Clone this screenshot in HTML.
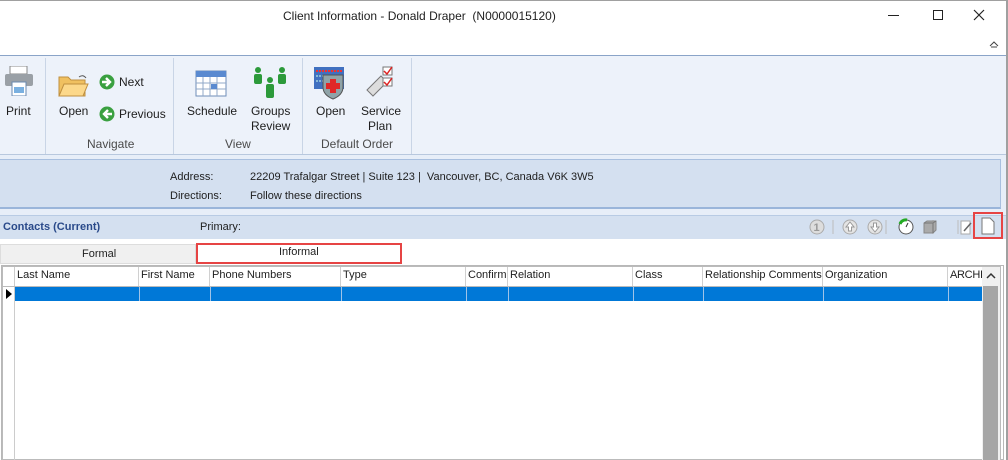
<!DOCTYPE html>
<html><head><meta charset="utf-8"><style>
*{margin:0;padding:0;box-sizing:border-box}
body{width:1008px;height:460px;overflow:hidden;background:#fff;font-family:"Liberation Sans","DejaVu Sans",sans-serif;font-size:12px;color:#1e1e1e;position:relative}
.a{position:absolute}
.t{position:absolute;white-space:nowrap}
.sep{position:absolute;top:58px;width:1px;height:96px;background:#c9d5e6}
.hd{position:absolute;top:267px;height:19px;border-right:1px solid #d0d0d0;font-size:11px;padding:2px 0 0 2px;white-space:nowrap;overflow:hidden}
.vl{position:absolute;top:287px;height:14px;width:1px;background:#9fc3e8}
</style></head><body>
<div class="a" style="left:1006px;top:0;width:2px;height:460px;background:#a0a0a0"></div>
<div class="a" style="left:0;top:0;width:1008px;height:1px;background:#a0a0a0"></div>
<div class="t" style="left:283px;top:9px;font-size:12px">Client Information - Donald Draper&nbsp; (N0000015120)</div>
<div class="a" style="left:888px;top:15px;width:11px;height:1px;background:#222"></div>
<div class="a" style="left:933px;top:10px;width:10px;height:10px;border:1px solid #222"></div>
<svg class="a" style="left:973px;top:9px" width="12" height="12"><path d="M1 1l10 10M11 1L1 11" stroke="#222" stroke-width="1.2"/></svg>
<svg class="a" style="left:989px;top:40px" width="10" height="8"><path d="M1 6l4-4 4 4M2 7h6" stroke="#444" fill="none"/></svg>
<div class="a" style="left:0;top:55px;width:1006px;height:100px;background:#edf2fa;border-top:1px solid #8aa4c8;border-bottom:1px solid #b8c8de"></div>
<div class="sep" style="left:45px"></div><div class="sep" style="left:173px"></div><div class="sep" style="left:302px"></div><div class="sep" style="left:411px"></div>
<svg class="a" style="left:4px;top:66px" width="30" height="30"><rect x="6" y="0" width="17" height="8" fill="#fff" stroke="#888"/><rect x="1" y="8" width="28" height="12" rx="2" fill="#9aa0a6"/><rect x="8" y="16" width="14" height="14" fill="#fff" stroke="#6a8ab0"/><rect x="10" y="21" width="10" height="6" fill="#7ab0e0"/></svg>
<svg class="a" style="left:57px;top:73px" width="32" height="26"><path d="M2 4h9l3 3h14v16H2z" fill="#f0c060" stroke="#c09040"/><path d="M2 23l5-12h24l-5 12z" fill="#fcd88a" stroke="#c09040"/><path d="M22 4q4-3 7 1" fill="none" stroke="#555"/></svg>
<svg class="a" style="left:99px;top:74px" width="16" height="16"><circle cx="8" cy="8" r="7.5" fill="#3aa040"/><path d="M3 8h6M7 4l4 4-4 4" stroke="#fff" stroke-width="2.4" fill="none"/></svg>
<svg class="a" style="left:99px;top:106px" width="16" height="16"><circle cx="8" cy="8" r="7.5" fill="#3aa040"/><path d="M13 8H7M9 4L5 8l4 4" stroke="#fff" stroke-width="2.4" fill="none"/></svg>
<svg class="a" style="left:195px;top:67px" width="32" height="30"><rect x="1" y="4" width="30" height="25" fill="#fff" stroke="#6f8db8"/><rect x="1" y="4" width="30" height="6" fill="#5a8ad0"/><path d="M1 16h30M1 22h30M8 10v19M15 10v19M22 10v19" stroke="#90a8c8"/><rect x="16" y="17" width="6" height="5" fill="#5a8ad0"/></svg>
<svg class="a" style="left:252px;top:66px" width="36" height="34"><g fill="#2c9a3a"><circle cx="6" cy="4" r="3"/><rect x="2" y="8" width="8" height="10" rx="2"/><circle cx="30" cy="4" r="3"/><rect x="26" y="8" width="8" height="10" rx="2"/><circle cx="18" cy="14" r="3"/><rect x="14" y="18" width="8" height="14" rx="2"/></g></svg>
<svg class="a" style="left:313px;top:66px" width="34" height="34"><rect x="1" y="1" width="30" height="22" fill="#4070c0"/><path d="M3 5h26" stroke="#e33" stroke-dasharray="2 1" stroke-width="2"/><path d="M3 10h26M3 15h26" stroke="#cfe" stroke-dasharray="2 1"/><path d="M10 9h20v12q0 8-10 12q-10-4-10-12z" fill="#8fa3a8" stroke="#555"/><path d="M17 13h6v4h4v6h-4v4h-6v-4h-4v-6h4z" fill="#e02828"/></svg>
<svg class="a" style="left:363px;top:66px" width="34" height="32"><path d="M4 24l14-14 6 6-14 14z" fill="#ddd" stroke="#777"/><rect x="20" y="1" width="9" height="8" fill="#fff" stroke="#777"/><rect x="20" y="12" width="9" height="8" fill="#fff" stroke="#777"/><path d="M21 5l3 3 5-7M21 16l3 3 5-7" stroke="#d22" stroke-width="1.5" fill="none"/></svg>
<div class="t" style="left:6px;top:104px">Print</div>
<div class="t" style="left:59px;top:104px">Open</div>
<div class="t" style="left:119px;top:75px">Next</div>
<div class="t" style="left:119px;top:107px">Previous</div>
<div class="t" style="left:87px;top:137px;color:#4a4a4a">Navigate</div>
<div class="t" style="left:187px;top:104px">Schedule</div>
<div class="t" style="left:251px;top:104px">Groups</div>
<div class="t" style="left:251px;top:119px">Review</div>
<div class="t" style="left:225px;top:137px;color:#4a4a4a">View</div>
<div class="t" style="left:316px;top:104px">Open</div>
<div class="t" style="left:361px;top:104px">Service</div>
<div class="t" style="left:368px;top:119px">Plan</div>
<div class="t" style="left:321px;top:137px;color:#4a4a4a">Default Order</div>
<div class="a" style="left:0;top:155px;width:1006px;height:62px;background:#e7eef8"></div>
<div class="a" style="left:0;top:159px;width:1001px;height:50px;background:#d4e0f0;border:1px solid #a8bfdf;border-left:none;border-bottom:2px solid #9ab5da"></div>
<div class="t" style="left:170px;top:171px;font-size:11px">Address:</div>
<div class="t" style="left:250px;top:171px;font-size:11px">22209 Trafalgar Street | Suite 123 |&nbsp; Vancouver, BC, Canada V6K 3W5</div>
<div class="t" style="left:170px;top:190px;font-size:11px">Directions:</div>
<div class="t" style="left:250px;top:190px;font-size:11px">Follow these directions</div>
<div class="a" style="left:0;top:215px;width:1006px;height:24px;background:#d4e0f0;border-top:1px solid #b8cbe4"></div>
<div class="t" style="left:3px;top:221px;font-weight:bold;color:#2a4a8a;font-size:11px">Contacts (Current)</div>
<div class="t" style="left:200px;top:221px;font-size:11px">Primary:</div>
<svg class="a" style="left:800px;top:218px" width="172" height="18">
<circle cx="17" cy="9" r="7" fill="#ddd" stroke="#aaa"/><text x="13.5" y="13" font-size="11" font-weight="bold" fill="#999" font-family="Liberation Sans">1</text>
<path d="M33 2v14M86 2v14M133 2v14M158 2v14" stroke="#bbb"/>
<circle cx="50" cy="9" r="7" fill="#e4e4e4" stroke="#aaa"/><path d="M50 4l-4 5h2.5v4h3v-4H54z" fill="#fff" stroke="#999"/>
<circle cx="75" cy="9" r="7" fill="#e4e4e4" stroke="#aaa"/><path d="M75 14l-4-5h2.5V5h3v4H79z" fill="#fff" stroke="#999"/>
<circle cx="106" cy="9" r="7" fill="#fff" stroke="#555"/><path d="M100 6a6 6 0 0 1 7-4" stroke="#2a2" stroke-width="3" fill="none"/><path d="M106 9l2-4" stroke="#333"/>
<path d="M124 5l3-2h9v9l-3 3h-9z" fill="#aaa" stroke="#888"/><path d="M124 5h9v10M133 5l3-2" stroke="#777" fill="none"/>
<rect x="161" y="3" width="9" height="13" fill="#fff" stroke="#aaa"/><path d="M164 13l7-8" stroke="#666" stroke-width="1.5"/>
</svg>
<svg class="a" style="left:980px;top:217px" width="16" height="18"><path d="M2 1h8l4 4v12H2z" fill="#fff" stroke="#777"/></svg>
<div class="a" style="left:973px;top:212px;width:30px;height:27px;border:2px solid #e64444"></div>
<div class="a" style="left:0;top:244px;width:196px;height:20px;background:#f0f0f0;border:1px solid #ddd"></div>
<div class="t" style="left:82px;top:248px;font-size:11px">Formal</div>
<div class="a" style="left:196px;top:243px;width:206px;height:21px;border:2px solid #e64444;background:#fff"></div>
<div class="t" style="left:279px;top:246px;font-size:11px">Informal</div>
<div class="a" style="left:1px;top:265px;width:1003px;height:195px;border:1px solid #b8b8b8"></div>
<div class="a" style="left:2px;top:266px;width:999px;height:194px;border:1px solid #bbb"></div>
<div class="a" style="left:3px;top:267px;width:12px;height:193px;border-right:1px solid #ccc"></div>
<div class="a" style="left:3px;top:286px;width:980px;height:1px;background:#bbb"></div>
<div class="hd" style="left:15px;width:124px">Last Name</div>
<div class="hd" style="left:139px;width:71px">First Name</div>
<div class="hd" style="left:210px;width:131px">Phone Numbers</div>
<div class="hd" style="left:341px;width:125px">Type</div>
<div class="hd" style="left:466px;width:42px">Confirm</div>
<div class="hd" style="left:508px;width:125px">Relation</div>
<div class="hd" style="left:633px;width:70px">Class</div>
<div class="hd" style="left:703px;width:120px">Relationship Comments</div>
<div class="hd" style="left:823px;width:125px">Organization</div>
<div class="hd" style="left:948px;width:35px;border:none;overflow:visible;letter-spacing:-0.3px">ARCHI</div>
<div class="a" style="left:15px;top:287px;width:967px;height:14px;background:#0078d7"></div>
<div class="vl" style="left:139px"></div><div class="vl" style="left:210px"></div><div class="vl" style="left:341px"></div><div class="vl" style="left:466px"></div><div class="vl" style="left:508px"></div><div class="vl" style="left:633px"></div><div class="vl" style="left:703px"></div><div class="vl" style="left:823px"></div><div class="vl" style="left:948px"></div>
<svg class="a" style="left:5px;top:288px" width="8" height="12"><path d="M1 1l6 5-6 5z" fill="#000"/></svg>
<div class="a" style="left:982px;top:267px;width:18px;height:193px;background:#f0f0f0"></div>
<svg class="a" style="left:986px;top:272px" width="10" height="8"><path d="M1 6l4-4 4 4" stroke="#333" stroke-width="1.5" fill="none"/></svg>
<div class="a" style="left:983px;top:286px;width:15px;height:174px;background:#a6a6a6"></div>
</body></html>
